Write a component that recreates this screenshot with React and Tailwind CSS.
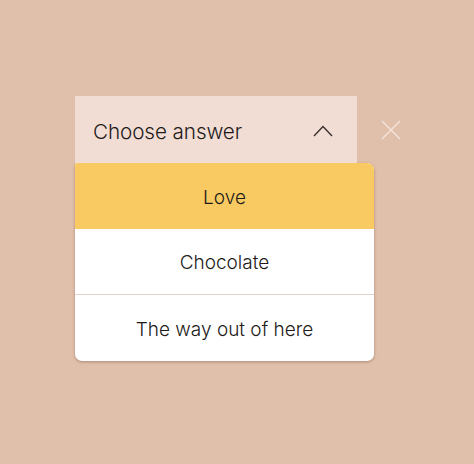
export default function App() {
  return (
    <div className="w-[474px] h-[464px] bg-[#e0bfab] pt-[96px] pl-[75px]" style={{ fontFamily: 'Inter, "Noto Sans", sans-serif' }}>
      <div className="flex items-start">
        <div className="w-[282px] h-[67px] bg-[#f2ddd5] flex items-center justify-between pl-[18px] pr-[24px]">
          <span className="text-[20.7px] font-light text-[#221a18] tracking-[-0.1px] pt-[5px]">Choose answer</span>
          <svg width="20" height="12" viewBox="0 0 20 12" fill="none" stroke="#3a302d" strokeWidth="1.4" className="mt-[2px]">
            <path d="M1 11 L10 1.5 L19 11" />
          </svg>
        </div>
        <div className="ml-[24px] mt-[24px]">
          <svg width="20" height="20" viewBox="0 0 20 20" fill="none" stroke="#f4e4dc" strokeWidth="1.4">
            <path d="M1 1 L19 19 M19 1 L1 19" />
          </svg>
        </div>
      </div>
      <div className="w-[299px] rounded-b-[7px] rounded-tr-[7px] rounded-tl-[3px] overflow-hidden bg-white shadow-[0_1px_3px_rgba(80,40,20,0.35)]">
        <div className="h-[66px] bg-[#f9ca62] flex items-center justify-center text-[19px] font-light text-[#221a18] pt-[4px]">Love</div>
        <div className="h-[66px] border-b border-[#e3d3cc] flex items-center justify-center text-[19px] font-light text-[#221a18] pt-[4px]">Chocolate</div>
        <div className="h-[66px] flex items-center justify-center text-[19px] font-light text-[#221a18] pt-[4px]">The way out of here</div>
      </div>
    </div>
  );
}
